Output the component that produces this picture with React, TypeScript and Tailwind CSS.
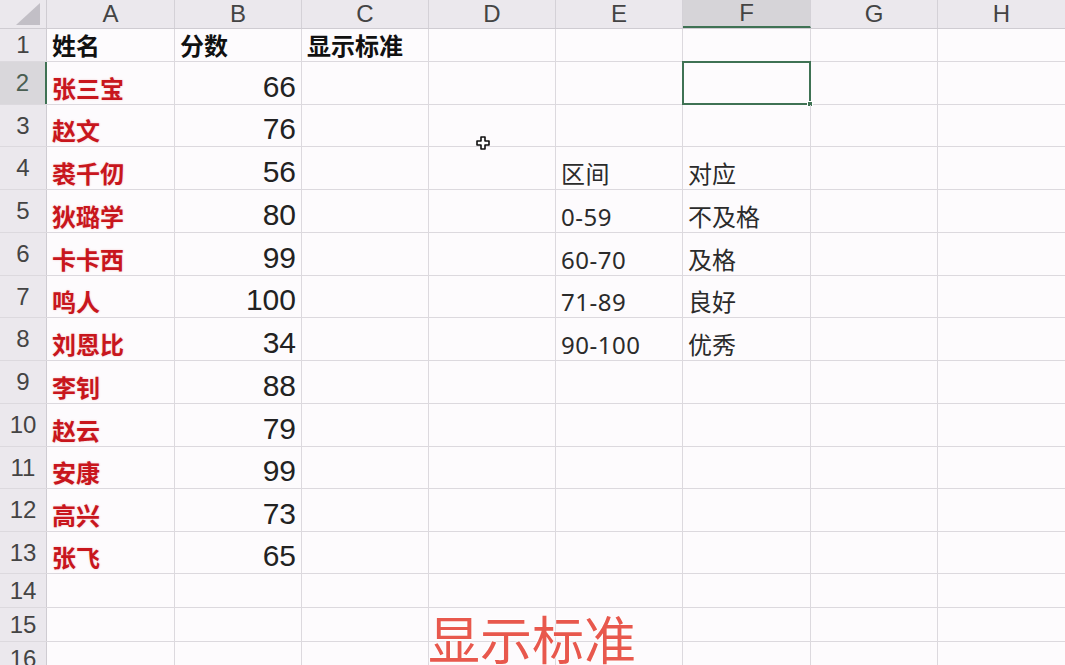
import React from 'react'

const COLS = ['A', 'B', 'C', 'D', 'E', 'F', 'G', 'H']
const COL_W = [128, 127, 127, 127, 127, 128, 127, 128]
const ROW_H = [33, 43, 42, 43, 43, 43, 42, 43, 43, 43, 42, 43, 42, 34, 34, 34]

const NAMES = ['张三宝', '赵文', '裘千仞', '狄璐学', '卡卡西', '鸣人', '刘恩比', '李钊', '赵云', '安康', '高兴', '张飞']
const SCORES = [66, 76, 56, 80, 99, 100, 34, 88, 79, 99, 73, 65]
const RANGES: Record<number, [string, string]> = {
  4: ['区间', '对应'],
  5: ['0-59', '不及格'],
  6: ['60-70', '及格'],
  7: ['71-89', '良好'],
  8: ['90-100', '优秀'],
}

const cjk = "font-['Noto_Sans','Noto_Sans_CJK_SC',sans-serif]"
const num = "font-['Liberation_Sans','Noto_Sans_CJK_SC',sans-serif]"

function Cursor() {
  return (
    <svg width="14" height="14" viewBox="0 0 14 14" className="absolute left-[476px] top-[136px]">
      <path
        d="M5 1h4v4h4v4h-4v4h-4v-4h-4v-4h4z"
        fill="#fff"
        stroke="#111"
        strokeWidth="1.6"
        strokeLinejoin="round"
      />
    </svg>
  )
}

function Cell({ row, col }: { row: number; col: number }) {
  let content: React.ReactNode = null
  if (row === 1) {
    if (col === 0) content = <span className={`${cjk} text-[24px] font-bold text-[#111]`}>姓名</span>
    if (col === 1) content = <span className={`${cjk} text-[24px] font-bold text-[#111]`}>分数</span>
    if (col === 2) content = <span className={`${cjk} text-[24px] font-bold text-[#111]`}>显示标准</span>
  } else if (row >= 2 && row <= 13) {
    if (col === 0)
      content = (
        <span className={`${cjk} text-[24px] font-bold text-[#c8161d] [text-shadow:0_0_2px_rgba(220,60,60,0.3)]`}>
          {NAMES[row - 2]}
        </span>
      )
    if (col === 1) content = <span className={`${num} text-[30px] text-[#222] -mb-[1px]`}>{SCORES[row - 2]}</span>
  }
  if (RANGES[row]) {
    if (col === 4)
      content = <span className={`${cjk} text-[24px] text-[#2b2b2b] tracking-[0.5px]`}>{RANGES[row][0]}</span>
    if (col === 5) content = <span className={`${cjk} text-[24px] text-[#2b2b2b]`}>{RANGES[row][1]}</span>
  }
  const right = row >= 2 && row <= 13 && col === 1
  const selected = row === 2 && col === 5
  return (
    <div
      className={`relative shrink-0 flex items-end border-r border-[#dcd9de] leading-none pb-[3px] ${
        right ? 'justify-end pr-[5px]' : 'pl-[5px]'
      }`}
      style={{ width: COL_W[col] }}
    >
      {content}
      {selected && (
        <div className="absolute -left-[1px] -top-[1px] -right-[1px] -bottom-[1px] border-2 border-[#3f7254]">
          <div className="absolute -right-[4px] -bottom-[4px] w-[6px] h-[6px] bg-[#3f7254] border border-white" />
        </div>
      )}
    </div>
  )
}

export default function App() {
  return (
    <div className="relative w-[1065px] h-[665px] overflow-hidden bg-[#fdfbfd] select-none">
      <div className="flex h-[29px] bg-[#ebe8ed] border-b border-[#cfccd2]">
        <div className="relative w-[47px] shrink-0 border-r border-[#cfccd2]">
          <svg width="26" height="22" viewBox="0 0 26 22" className="absolute right-[4px] bottom-[3px]">
            <path d="M24 0V22H0Z" fill="#c2bfc6" />
          </svg>
        </div>
        {COLS.map((c, i) => (
          <div
            key={c}
            className={`shrink-0 flex items-center justify-center border-r border-[#d4d1d7] font-['Liberation_Sans',sans-serif] text-[24px] text-[#444] ${
              c === 'F' ? 'bg-[#d6d4d8] border-b-2 border-b-[#3f7254]' : ''
            }`}
            style={{ width: COL_W[i] }}
          >
            {c}
          </div>
        ))}
      </div>
      {ROW_H.map((h, r) => {
        const row = r + 1
        return (
          <div key={row} className="flex border-b border-[#dcd9de]" style={{ height: h }}>
            <div
              className={`w-[47px] shrink-0 flex items-center justify-center font-['Liberation_Sans',sans-serif] text-[24px] ${
                row === 2
                  ? 'bg-[#d9d7db] border-r-2 border-[#3f7254] text-[#4a5e52]'
                  : 'bg-[#ebe8ed] border-r border-[#cfccd2] text-[#444]'
              }`}
            >
              {row}
            </div>
            {COLS.map((c, i) => (
              <Cell key={c} row={row} col={i} />
            ))}
          </div>
        )
      })}
      <Cursor />
      <div
        className={`absolute left-[428px] top-[614px] ${cjk} text-[52px] leading-none text-[#e8584d] [text-shadow:0_0_3px_#fff,0_0_3px_#fff]`}
      >
        显示标准
      </div>
    </div>
  )
}
